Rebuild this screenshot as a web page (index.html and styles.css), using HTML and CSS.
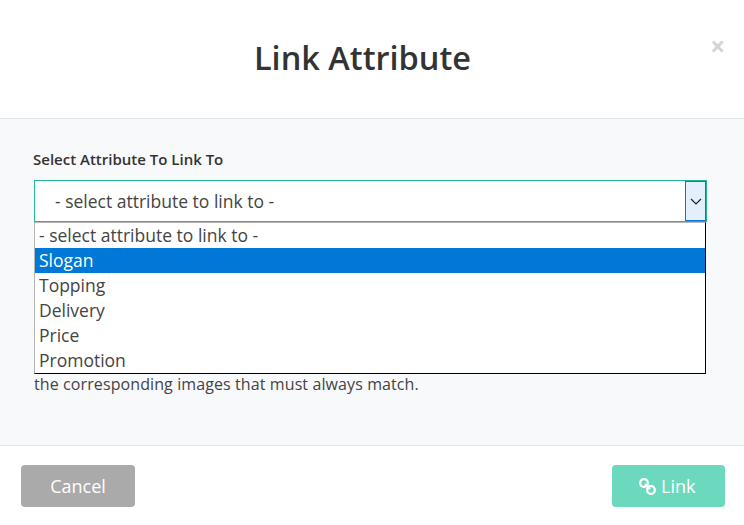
FILE: index.html
```html
<!DOCTYPE html>
<html lang="en">
<head>
    <meta charset="UTF-8">
    <title>Link Attribute</title>
    <link rel="stylesheet" href="styles.css">
</head>
<body>
    <div class="modal">
        <div class="modal-header">
            <h1>Link Attribute</h1>
            <span class="close">×</span>
        </div>

        <div class="modal-body">
            <label class="field-label">Select Attribute To Link To</label>
            <div class="select-wrap">
                <div class="select-box">
                    <span class="select-value">- select attribute to link to -</span>
                    <span class="select-arrow">
                        <svg width="12" height="7" viewBox="0 0 12 7"><path d="M1 1l5 5 5-5" fill="none" stroke="#222" stroke-width="1.2"/></svg>
                    </span>
                </div>
                <ul class="select-list">
                    <li>- select attribute to link to -</li>
                    <li class="selected">Slogan</li>
                    <li>Topping</li>
                    <li>Delivery</li>
                    <li>Price</li>
                    <li>Promotion</li>
                </ul>
            </div>
            <p class="help">the corresponding images that must always match.</p>
        </div>

        <div class="modal-footer">
            <button class="btn btn-cancel">Cancel</button>
            <button class="btn btn-link">
                <svg class="link-icon" width="17" height="17" viewBox="0 0 17 17"><g fill="none" stroke="#fff" stroke-width="2.2"><rect x="1.2" y="1.2" width="7.6" height="7.6" rx="3.4"/><rect x="8.2" y="8.2" width="7.6" height="7.6" rx="3.4"/></g><path d="M6 6l5 5" stroke="#fff" stroke-width="2"/></svg>
                Link
            </button>
        </div>
    </div>
</body>
</html>
```

FILE: styles.css
```css
* {
    margin: 0;
    padding: 0;
    box-sizing: border-box;
}

body {
    background-color: #fff;
    font-family: "Open Sans", sans-serif;
    color: #333;
}

.modal {
    width: 744px;
    height: 525px;
    display: flex;
    flex-direction: column;
}

.modal-header {
    position: relative;
    height: 119px;
    border-bottom: 1px solid #e3e5ea;
    display: flex;
    justify-content: center;
    padding: 36px 19px 0 0;
}

h1 {
    font-size: 32.5px;
    font-weight: 600;
    line-height: 44px;
    color: #333;
}

.close {
    position: absolute;
    top: 32px;
    right: 19px;
    font-size: 26px;
    font-weight: 700;
    line-height: 28px;
    color: #d4d4d4;
}

.modal-body {
    height: 326px;
    background-color: #f8f9fb;
    padding: 30px 34px 0 33px;
}

.field-label {
    display: block;
    font-size: 15px;
    font-weight: 600;
    line-height: 20px;
    margin-bottom: 11px;
}

.select-wrap {
    position: relative;
    width: 673px;
    margin-left: 1px;
}

.select-box {
    height: 42px;
    background-color: #fff;
    border: 1px solid #1fb797;
    display: flex;
    justify-content: space-between;
    font-size: 17.5px;
    line-height: 40px;
    color: #444;
}

.select-value {
    padding-left: 20px;
}

.select-arrow {
    width: 21px;
    background-color: #e3effa;
    border: 1px solid #0078d7;
    display: flex;
    justify-content: center;
    align-items: center;
}

.select-list {
    position: absolute;
    top: 42px;
    left: 0;
    width: 672px;
    background-color: #fff;
    border: 1px solid #000;
    border-left-color: #b5b5b5;
    border-top-color: #b5b5b5;
    list-style: none;
    font-size: 17.5px;
    line-height: 25px;
    color: #444;
}

.select-list li {
    height: 25px;
    padding-left: 4px;
}

.select-list .selected {
    background-color: #0078d7;
    color: #fff;
}

.help {
    font-size: 16px;
    letter-spacing: 0.1px;
    line-height: 22px;
    margin-top: 151px;
    margin-left: 1px;
    color: #444;
}

.modal-footer {
    height: 80px;
    border-top: 1px solid #e3e5ea;
    display: flex;
    justify-content: space-between;
    padding: 19px 19px 0 21px;
}

.btn {
    width: 114px;
    height: 42px;
    border: none;
    border-radius: 4px;
    color: #fff;
    font-family: "Open Sans", sans-serif;
    font-size: 18px;
}

.btn-cancel {
    background-color: #aaa;
}

.btn-link {
    width: 113px;
    background-color: #6cd9bf;
    padding-right: 2px;
}

.link-icon {
    vertical-align: -2px;
}
```
